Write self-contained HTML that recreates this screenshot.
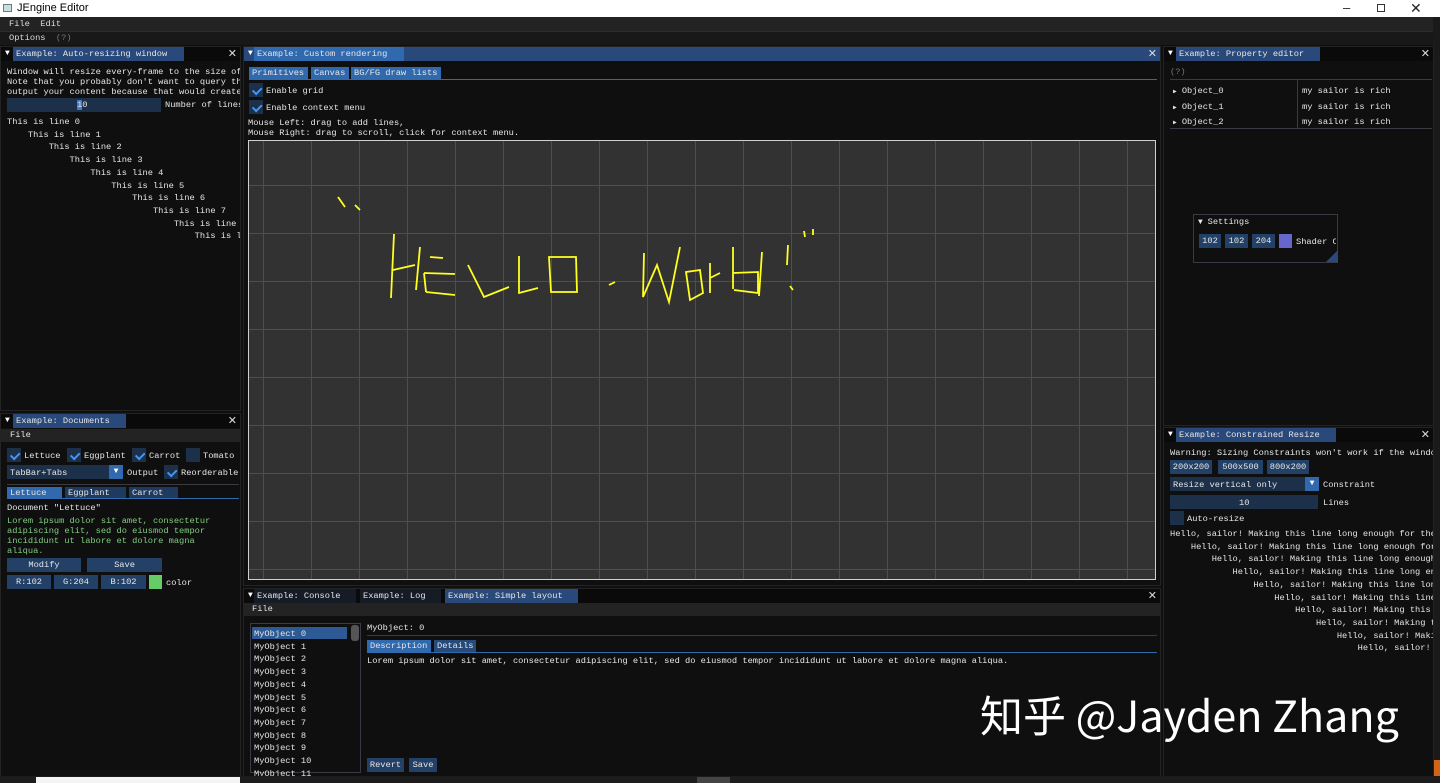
<!DOCTYPE html>
<html><head><meta charset="utf-8">
<style>
*{margin:0;padding:0;box-sizing:border-box}
body{width:1440px;height:783px;overflow:hidden;background:#0f0f0f;position:relative;font-family:"Liberation Mono",monospace;font-size:8.7px;line-height:10px;color:#e6e6e6}
.a{position:absolute;white-space:pre}
.win{position:absolute;background:#0f0f0f;border:1px solid #232323;overflow:hidden}
.tbar{position:absolute;left:0;right:0;top:0;height:14px;background:#0a0a0a}
.ttab{position:absolute;top:0;height:14px;background:#29497a;padding-left:3px;line-height:14px;white-space:pre}
.ttab.in{background:#151c26}
.arr{position:absolute;top:0;left:4px;font-size:8px;line-height:14px;color:#fff}
.cls{position:absolute;top:0;right:3px;font-size:11px;line-height:14px;color:#ddd;font-family:"Liberation Sans",sans-serif}
.fr{position:absolute;background:#1d3049}
.btn{position:absolute;background:#234066;text-align:center;line-height:14px;white-space:pre}
.cb{position:absolute;width:14px;height:14px;background:#1d3049}
.cb.on::after{content:"";position:absolute;left:3px;top:2px;width:7px;height:4px;border-left:2px solid #4296fa;border-bottom:2px solid #4296fa;transform:rotate(-45deg) translate(-1px,2px)}
.tab{position:absolute;height:12px;background:#1f3a5f;line-height:12px;padding-left:3px;white-space:pre}
.tab.on{background:#3069ad}
.line{position:absolute;height:1px;background:#3069ad}
.sep{position:absolute;height:1px;background:#3a3a44}
.menu{position:absolute;left:0;right:0;height:13px;background:#232323;line-height:13px}
</style></head><body>
<div class="a" style="left:0;top:0;width:1440px;height:17px;background:#fff"></div>
<div class="a" style="left:3px;top:4px;width:9px;height:8px;border:1px solid #6a7a8a;background:#cdd"></div>
<div class="a" style="left:17px;top:2px;font:11px/13px 'Liberation Sans',sans-serif;color:#000">JEngine Editor</div>
<div class="a" style="left:1343px;top:1px;font:13px/14px 'Liberation Sans',sans-serif;color:#222">–</div>
<div class="a" style="left:1377px;top:4px;width:8px;height:8px;border:1px solid #333"></div>
<div class="a" style="left:1410px;top:0px;font:14px/16px 'Liberation Sans',sans-serif;color:#222">✕</div>
<div class="a" style="left:0;top:17px;width:1433px;height:14px;background:#232323"></div>
<div class="a" style="left:9px;top:19px;color:#ddd">File  Edit</div>
<div class="a" style="left:0;top:31px;width:1433px;height:14px;background:#181818;border-top:1px solid #2c2c2c"></div>
<div class="a" style="left:9px;top:33px;color:#ddd">Options  <span style="color:#777">(?)</span></div>
<div class="a" style="left:1433px;top:17px;width:7px;height:759px;background:#1a1a1a"></div>
<div class="a" style="left:1434px;top:760px;width:6px;height:16px;background:#d0651a"></div>

<div class="win" style="left:0;top:46px;width:241px;height:365px">
 <div class="tbar"></div><div class="ttab" style="left:12px;width:171px">Example: Auto-resizing window</div>
 <div class="arr">▼</div><div class="cls">✕</div>
 <div class="a" style="left:6px;top:20px">Window will resize every-frame to the size of its content.
Note that you probably don't want to query the window size to
output your content because that would create a feedback loop.</div>
 <div class="fr" style="left:6px;top:51px;width:154px;height:14px"></div>
 <div class="a" style="left:76px;top:53px"><span style="background:#3d7cd0">1</span>0</div>
 <div class="a" style="left:164px;top:53px">Number of lines</div>
 <div class="a" style="left:6px;top:69px;line-height:12.7px">This is line 0
    This is line 1
        This is line 2
            This is line 3
                This is line 4
                    This is line 5
                        This is line 6
                            This is line 7
                                This is line 8
                                    This is line 9</div>
</div>

<div class="win" style="left:0;top:413px;width:241px;height:364px">
 <div class="tbar"></div><div class="ttab" style="left:12px;width:113px">Example: Documents</div>
 <div class="arr">▼</div><div class="cls">✕</div>
 <div class="menu" style="top:15px;padding-left:9px">File</div>
 <div class="cb on" style="left:6px;top:34px"></div><div class="a" style="left:23px;top:37px">Lettuce</div>
 <div class="cb on" style="left:66px;top:34px"></div><div class="a" style="left:83px;top:37px">Eggplant</div>
 <div class="cb on" style="left:131px;top:34px"></div><div class="a" style="left:148px;top:37px">Carrot</div>
 <div class="cb" style="left:185px;top:34px"></div><div class="a" style="left:202px;top:37px">Tomato</div>
 <div class="fr" style="left:6px;top:51px;width:116px;height:14px"></div>
 <div class="a" style="left:9px;top:54px">TabBar+Tabs</div>
 <div class="a" style="left:108px;top:51px;width:14px;height:14px;background:#3069ad;color:#fff;text-align:center;line-height:14px;font-size:8px">▼</div>
 <div class="a" style="left:126px;top:54px">Output</div>
 <div class="cb on" style="left:163px;top:51px"></div><div class="a" style="left:180px;top:54px">Reorderable</div>
 <div class="sep" style="left:6px;top:70px;width:232px"></div>
 <div class="tab on" style="left:6px;top:73px;width:55px">Lettuce</div>
 <div class="tab" style="left:64px;top:73px;width:61px">Eggplant</div>
 <div class="tab" style="left:128px;top:73px;width:49px">Carrot</div>
 <div class="line" style="left:6px;top:84px;width:232px"></div>
 <div class="a" style="left:6px;top:89px">Document "Lettuce"</div>
 <div class="a" style="left:6px;top:102px;color:#80cc80">Lorem ipsum dolor sit amet, consectetur
adipiscing elit, sed do eiusmod tempor
incididunt ut labore et dolore magna
aliqua.</div>
 <div class="btn" style="left:6px;top:144px;width:74px">Modify</div>
 <div class="btn" style="left:86px;top:144px;width:75px">Save</div>
 <div class="btn fr" style="left:6px;top:161px;width:44px">R:102</div>
 <div class="btn fr" style="left:53px;top:161px;width:44px">G:204</div>
 <div class="btn fr" style="left:100px;top:161px;width:45px">B:102</div>
 <div class="a" style="left:148px;top:161px;width:13px;height:14px;background:#66cc66"></div>
 <div class="a" style="left:165px;top:164px">color</div>
</div>

<div class="win" style="left:243px;top:46px;width:918px;height:540px">
 <div class="tbar" style="background:#29497a"></div><div class="ttab" style="left:10px;width:150px;background:#3069ad">Example: Custom rendering</div>
 <div class="arr">▼</div><div class="cls">✕</div>
 <div class="tab on" style="left:5px;top:20px;width:59px">Primitives</div>
 <div class="tab on" style="left:67px;top:20px;width:38px;background:#2f68ad">Canvas</div>
 <div class="tab on" style="left:107px;top:20px;width:90px">BG/FG draw lists</div>
 <div class="line" style="left:5px;top:32px;width:908px"></div>
 <div class="cb on" style="left:5px;top:36px"></div><div class="a" style="left:22px;top:39px">Enable grid</div>
 <div class="cb on" style="left:5px;top:53px"></div><div class="a" style="left:22px;top:56px">Enable context menu</div>
 <div class="a" style="left:4px;top:71px">Mouse Left: drag to add lines,
Mouse Right: drag to scroll, click for context menu.</div>
</div>
<svg class="a" style="left:248px;top:140px" width="909" height="441">
 <rect x="0.5" y="0.5" width="907" height="439" fill="#323232" stroke="#d0d0d0"/>
 <g stroke="#4e4e4e" stroke-width="1">
  <path d="M15.5 1V439M63.5 1V439M111.5 1V439M159.5 1V439M207.5 1V439M255.5 1V439M303.5 1V439M351.5 1V439M399.5 1V439M447.5 1V439M495.5 1V439M543.5 1V439M591.5 1V439M639.5 1V439M687.5 1V439M735.5 1V439M783.5 1V439M831.5 1V439M879.5 1V439"/>
  <path d="M1 45.5H907M1 93.5H907M1 141.5H907M1 189.5H907M1 237.5H907M1 285.5H907M1 333.5H907M1 381.5H907M1 429.5H907"/>
 </g>
 <g stroke="#ffff20" stroke-width="1.8" fill="none" transform="translate(-248,-140)">
  <path d="M338 197L345 207M355 205L360 210"/>
  <path d="M394 234L391 298M393 270L415 265M420 247L416 290"/>
  <path d="M430 257L443 258M424 273L426 292M424 273L455 274M426 292L455 295"/>
  <path d="M468 265L484 297L509 287"/>
  <path d="M519 256L519 293L538 288"/>
  <path d="M549 257L576 257L577 292L551 292Z"/>
  <path d="M609 285L615 282"/>
  <path d="M644 253L643 297L657 265L669 302L680 247"/>
  <path d="M686 272L700 270L703 293L690 300Z"/>
  <path d="M710 263L710 293M710 278L720 273"/>
  <path d="M733 247L733 289M734 290L758 293L758 272L733 273M762 252L759 296"/>
  <path d="M788 245L787 265M790 286L793 290"/>
  <path d="M804 231L805 237M813 229L813 235"/>
 </g>
</svg>

<div class="win" style="left:243px;top:588px;width:918px;height:189px">
 <div class="tbar"></div>
 <div class="ttab in" style="left:10px;width:102px">Example: Console</div>
 <div class="ttab in" style="left:116px;width:81px">Example: Log</div>
 <div class="ttab" style="left:201px;width:133px">Example: Simple layout</div>
 <div class="arr">▼</div><div class="cls">✕</div>
 <div class="menu" style="top:14px;padding-left:8px">File</div>
 <div class="a" style="left:6px;top:34px;width:111px;height:150px;border:1px solid #3a3a44"></div>
 <div class="a" style="left:8px;top:38px;width:95px;height:12px;background:#2d5a94"></div>
 <div class="a" style="left:107px;top:36px;width:8px;height:16px;background:#555;border-radius:3px"></div>
 <div class="a" style="left:10px;top:39px;line-height:12.7px">MyObject 0
MyObject 1
MyObject 2
MyObject 3
MyObject 4
MyObject 5
MyObject 6
MyObject 7
MyObject 8
MyObject 9
MyObject 10
MyObject 11</div>
 <div class="a" style="left:123px;top:34px">MyObject: 0</div>
 <div class="sep" style="left:123px;top:46px;width:790px"></div>
 <div class="tab on" style="left:123px;top:51px;width:64px">Description</div>
 <div class="tab" style="left:190px;top:51px;width:42px;background:#264a7a">Details</div>
 <div class="line" style="left:123px;top:63px;width:790px"></div>
 <div class="a" style="left:123px;top:67px">Lorem ipsum dolor sit amet, consectetur adipiscing elit, sed do eiusmod tempor incididunt ut labore et dolore magna aliqua.</div>
 <div class="btn" style="left:123px;top:169px;width:37px">Revert</div>
 <div class="btn" style="left:165px;top:169px;width:28px">Save</div>
</div>

<div class="win" style="left:1163px;top:46px;width:271px;height:380px">
 <div class="tbar"></div><div class="ttab" style="left:12px;width:144px">Example: Property editor</div>
 <div class="arr">▼</div><div class="cls">✕</div>
 <div class="a" style="left:6px;top:20px;color:#777">(?)</div>
 <div class="a" style="left:6px;top:32px;width:262px;height:50px;border-top:1px solid #3a3a44;border-bottom:1px solid #3a3a44"></div>
 <div class="a" style="left:133px;top:32px;width:1px;height:50px;background:#3a3a44"></div>
 <div class="a" style="left:9px;top:37px;line-height:15.7px"><span style="font-size:6px">▶</span> Object_0
<span style="font-size:6px">▶</span> Object_1
<span style="font-size:6px">▶</span> Object_2</div>
 <div class="a" style="left:138px;top:37px;line-height:15.7px">my sailor is rich
my sailor is rich
my sailor is rich</div>
</div>
<div class="a" style="left:1193px;top:214px;width:145px;height:49px;background:#0f0f0f;border:1px solid #3a3a44"></div>
<div class="a" style="left:1198px;top:217px;font-size:8px">▼ <span style="font-size:8.7px">Settings</span></div>
<div class="btn fr" style="left:1199px;top:234px;width:22px">102</div>
<div class="btn fr" style="left:1225px;top:234px;width:23px">102</div>
<div class="btn fr" style="left:1252px;top:234px;width:23px">204</div>
<div class="a" style="left:1279px;top:234px;width:13px;height:14px;background:#6666cc"></div>
<div class="a" style="left:1296px;top:237px;width:40px;overflow:hidden">Shader Col</div>
<svg class="a" style="left:1326px;top:250px" width="12" height="12"><path d="M12 0V12H0Z" fill="#29497a"/></svg>

<div class="win" style="left:1163px;top:427px;width:271px;height:350px">
 <div class="tbar"></div><div class="ttab" style="left:12px;width:160px">Example: Constrained Resize</div>
 <div class="arr">▼</div><div class="cls">✕</div>
 <div class="a" style="left:6px;top:20px">Warning: Sizing Constraints won't work if the window</div>
 <div class="btn" style="left:6px;top:32px;width:42px">200x200</div>
 <div class="btn" style="left:54px;top:32px;width:45px">500x500</div>
 <div class="btn" style="left:103px;top:32px;width:42px">800x200</div>
 <div class="fr" style="left:6px;top:49px;width:149px;height:14px"></div>
 <div class="a" style="left:9px;top:52px">Resize vertical only</div>
 <div class="a" style="left:141px;top:49px;width:14px;height:14px;background:#3069ad;color:#fff;text-align:center;line-height:14px;font-size:8px">▼</div>
 <div class="a" style="left:159px;top:52px">Constraint</div>
 <div class="fr" style="left:6px;top:67px;width:148px;height:14px"></div>
 <div class="a" style="left:75px;top:70px">10</div>
 <div class="a" style="left:159px;top:70px">Lines</div>
 <div class="cb" style="left:6px;top:83px"></div><div class="a" style="left:23px;top:86px">Auto-resize</div>
 <div class="a" style="left:6px;top:100px;line-height:12.7px">Hello, sailor! Making this line long enough for the example.
    Hello, sailor! Making this line long enough for the example.
        Hello, sailor! Making this line long enough for the example.
            Hello, sailor! Making this line long enough for the example.
                Hello, sailor! Making this line long enough for the example.
                    Hello, sailor! Making this line long enough for the example.
                        Hello, sailor! Making this line long enough for the example.
                            Hello, sailor! Making this line long enough for the example.
                                Hello, sailor! Making this line long enough for the example.
                                    Hello, sailor! Making this line long enough for the example.</div>
</div>

<div class="a" style="left:980px;top:684px;font:43px/60px 'Noto Sans CJK SC',sans-serif;color:#fff">知乎 @Jayden Zhang</div>

<div class="a" style="left:0;top:776px;width:1440px;height:7px;background:#1c1c1c"></div>
<div class="a" style="left:36px;top:777px;width:204px;height:6px;background:#f4f4f4"></div>
<div class="a" style="left:697px;top:777px;width:33px;height:6px;background:#444"></div>
</body></html>
